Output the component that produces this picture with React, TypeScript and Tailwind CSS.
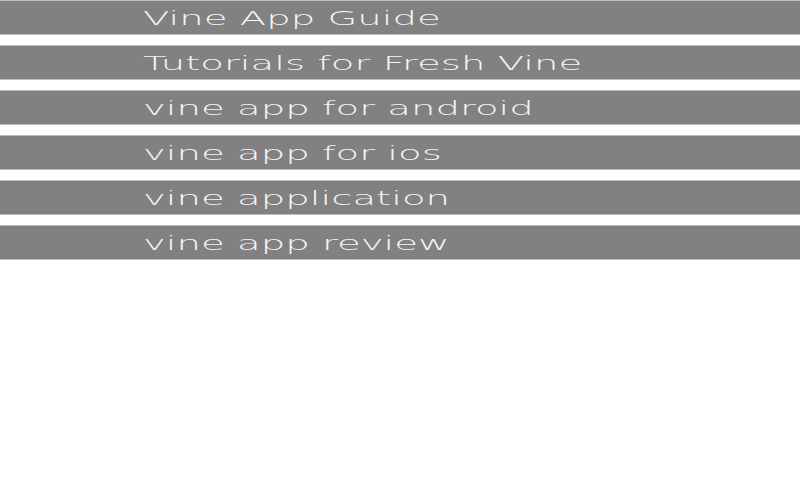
import React from 'react';

const items = [
  'Vine App Guide',
  'Tutorials for Fresh Vine',
  'vine app for android',
  'vine app for ios',
  'vine application',
  'vine app review',
];

export default function App() {
  return (
    <div className="w-[800px] h-[480px] bg-white overflow-hidden">
      <div className="flex flex-col gap-[10px]">
        {items.map((item) => (
          <div
            key={item}
            className="h-[35px] bg-[#818181] border-y border-[#bcbcbc] flex items-center pl-[143px]"
          >
            <span className="inline-block origin-left scale-x-[1.93] text-[20px] leading-none font-extralight text-[#f4f4f4] whitespace-nowrap font-['DejaVu_Sans',sans-serif]">
              {item}
            </span>
          </div>
        ))}
      </div>
    </div>
  );
}
